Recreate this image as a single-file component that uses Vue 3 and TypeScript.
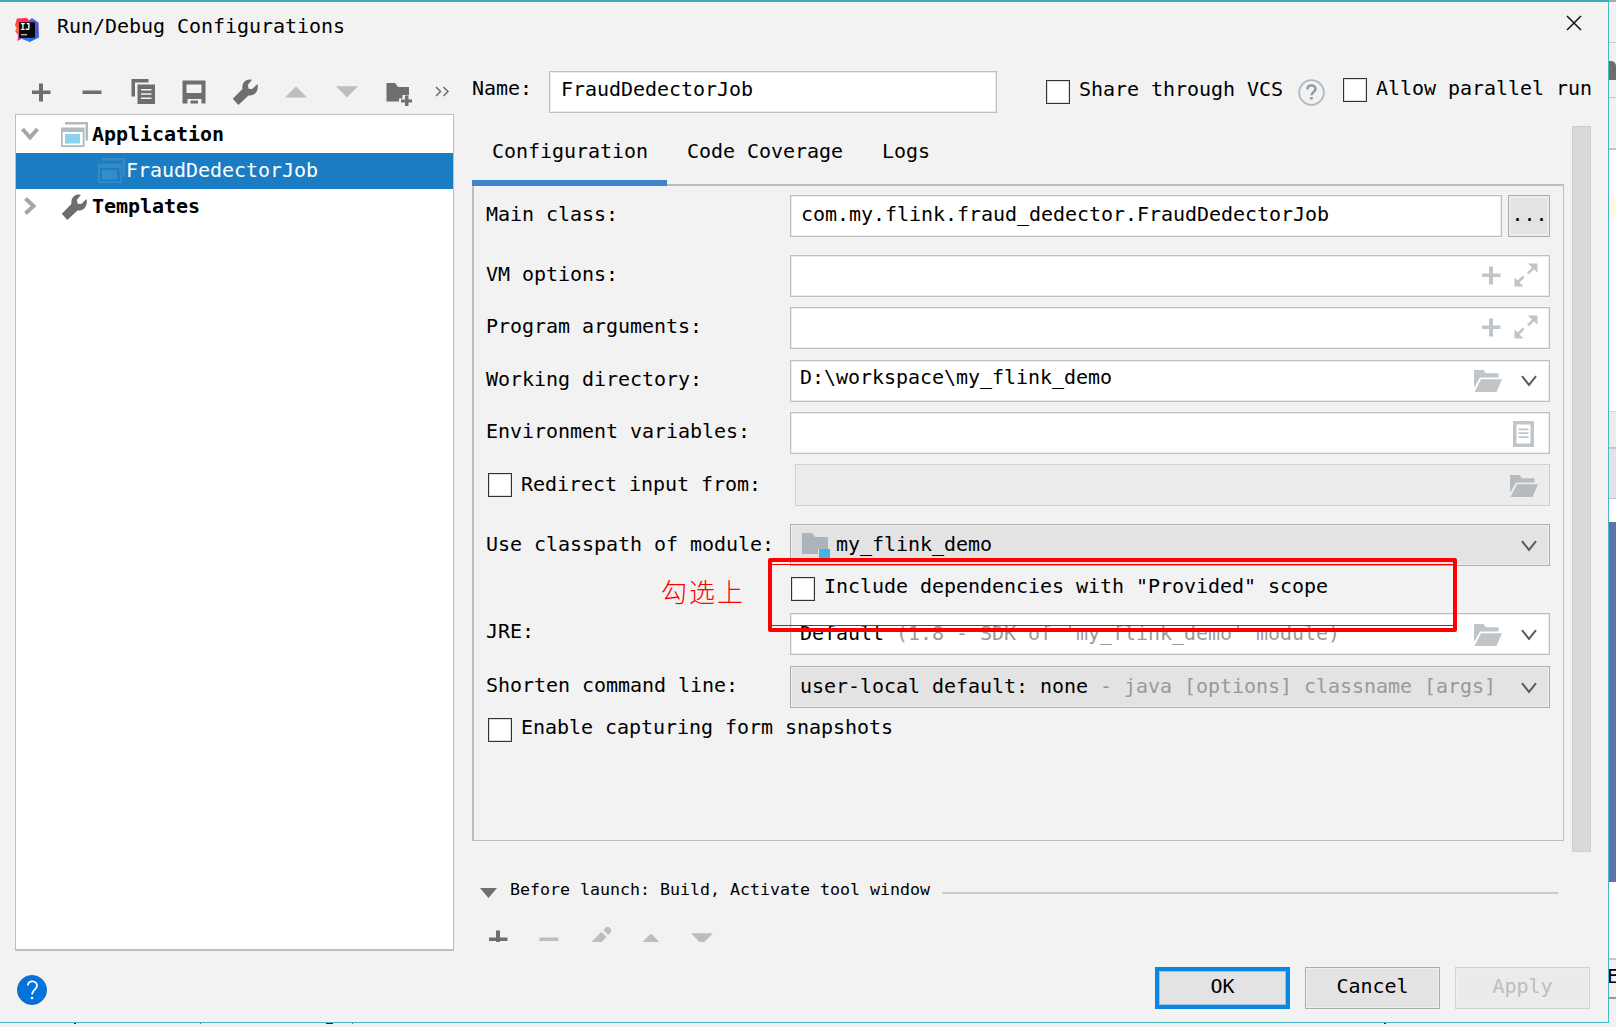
<script setup lang="ts">
import { ref } from 'vue'

interface ToolAction {
  icon: string
  title: string
  disabled?: boolean
}

const tools: ToolAction[] = [
  { icon: 'plus', title: 'Add' },
  { icon: 'minus', title: 'Remove' },
  { icon: 'copy', title: 'Copy' },
  { icon: 'save', title: 'Save' },
  { icon: 'wrench', title: 'Edit templates' },
  { icon: 'up', title: 'Move up', disabled: true },
  { icon: 'down', title: 'Move down', disabled: true },
  { icon: 'newfolder', title: 'Create folder' },
]

const launchTools: ToolAction[] = [
  { icon: 'plus', title: 'Add' },
  { icon: 'minus', title: 'Remove', disabled: true },
  { icon: 'pencil', title: 'Edit', disabled: true },
  { icon: 'up', title: 'Up', disabled: true },
  { icon: 'down', title: 'Down', disabled: true },
]

const tabs = ['Configuration', 'Code Coverage', 'Logs']
const activeTab = ref('Configuration')
</script>

<template>
  <div class="screen">
    <svg class="defs" width="0" height="0">
      <symbol id="plus" viewBox="0 0 27 27"><path d="M4 11.5h7v-7h4v7h7.500v3.500h-7.500v7.500h-4v-7.500h-7z" /></symbol>
      <symbol id="minus" viewBox="0 0 27 27"><path d="M3.500 11.500h19v3.500h-19z" /></symbol>
      <symbol id="copy" viewBox="0 0 27 27">
        <path d="M1.500 0h17v3.500H5v14H1.500z" /><path d="M7.500 5.500h17.500v19.500H7.500z" />
        <path class="cut" d="M11 10h10.500v1.600H11zM11 14.200h10.500v1.600H11zM11 18.400h10.500v1.600H11z" />
      </symbol>
      <symbol id="save" viewBox="0 0 27 27">
        <path fill-rule="evenodd" d="M1.500 1.500h23v23h-4v-4.500h-14v4.500h-5zM5.500 5.500v8.500h15V5.500z" /><path d="M9.500 21.500h7.500v3H9.500z" />
      </symbol>
      <symbol id="wrench" viewBox="0 0 27 27">
        <path d="M19.800 1.100C15.600-.7 9.600 2.500 10.400 10L.8 19.800l5.500 6.200 10.200-9.600c4.700.8 9.300-2.400 9.400-9.200l-.5-2.100-5.200 5-3.500-.3-.9-3.700z" />
      </symbol>
      <symbol id="up" viewBox="0 0 27 27"><path d="M13 7.500l11 11H2z" /></symbol>
      <symbol id="down" viewBox="0 0 27 27"><path d="M2 7.200h22L13 18.500z" /></symbol>
      <symbol id="newfolder" viewBox="0 0 27 27">
        <path d="M1.500 4h8.500l3 4h11v8h-6.500v3.500h-3.500v3H1.500z" /><path d="M20 16.500h3.500v4h3.500v3h-3.500V27H20v-3.500h-4v-3h4z" />
      </symbol>
      <symbol id="pencil" viewBox="0 0 27 27">
        <path d="M4 16.500L14.500 5.800l5 5.300L9 22H2v-4z" /><path d="M16.300 4l3-3c2-1.500 6.500 2 4.500 5.300l-2.600 2.600z" />
      </symbol>
      <symbol id="appwindow" viewBox="0 0 27 25">
        <path fill="#afbac3" d="M4 0h23v18.500h-2.500v-16H4z" />
        <path fill="#afbac3" fill-rule="evenodd" d="M0 5.500h23.500V25H0zM1.800 10v13.200h19.900V10z" />
        <path fill="#89d3ed" d="M4 12h15v9.500H4z" />
      </symbol>
      <symbol id="folder" viewBox="0 0 28 22"><path d="M0 0h9.500l2.500 3.300h12.500v4.200H6L0 18z" /><path d="M7 9.200h21L22.500 22H.5z" /></symbol>
      <symbol id="expand" viewBox="0 0 24 24">
        <path d="M14 .5h9.500v9l-3.500-3.200-5.200 5-1.800-1.700 5-5zM.5 14.500l3.200 3 5-4.900 1.800 1.800-5 5 4 4.100h-9z" />
      </symbol>
      <symbol id="chev" viewBox="0 0 16 12"><path d="M1 1.200l7 8.600 7-8.600" fill="none" stroke="#5a5a5a" stroke-width="2" /></symbol>
      <symbol id="doc" viewBox="0 0 21 26">
        <path fill-rule="evenodd" d="M0 0h21v26H0zM3.500 3.500v19h14v-19z" /><path d="M5.500 7.500h10v1.700h-10zM5.500 11.300h10v1.700h-10zM5.500 15.200h10v1.700h-10z" />
      </symbol>
    </svg>

    <div class="upper">
      <main class="dialog">
        <header class="titlebar">
          <svg class="logo" viewBox="0 0 24 24">
            <defs>
              <linearGradient id="lg1" x1="0" y1="0" x2="0" y2="1"><stop offset="0" stop-color="#fe2857" /><stop offset=".5" stop-color="#fd6a35" /><stop offset="1" stop-color="#b833c9" /></linearGradient>
              <linearGradient id="lg2" x1="0" y1="0" x2="0" y2="1"><stop offset="0" stop-color="#4b6fe0" /><stop offset=".4" stop-color="#6b45d2" /><stop offset="1" stop-color="#167eea" /></linearGradient>
            </defs>
            <path fill="url(#lg2)" d="M13 3l4-3 6.500 4.500.5 15L15 24l-8-3z" />
            <path fill="url(#lg1)" d="M2 .5L12 0l4 5-3 13-5 2-5.500 3L3 17l-3-4 1.500-2L0 7z" />
            <path fill="#080808" d="M4 4.200h16v15.600H4z" />
            <text x="5.200" y="12.300" font-size="8.500" font-weight="700" fill="#fff" font-family="DejaVu Sans Mono, monospace">IJ</text>
            <path fill="#bbb" d="M6 16h6v1.400H6z" />
          </svg>
          <h1>Run/Debug Configurations</h1>
          <svg class="close" viewBox="0 0 16 16"><path d="M1 1l14 14M15 1L1 15" fill="none" stroke="#111" stroke-width="1.500" /></svg>
        </header>

        <div class="body">
          <aside>
            <nav class="toolbar">
              <svg v-for="t in tools" :key="t.title" class="tool" :class="{ off: t.disabled }"><use :href="'#' + t.icon" /></svg>
              <svg class="more" viewBox="0 0 15 11"><path d="M1 1l4.500 4.500L1 10M8.500 1L13 5.500 8.500 10" fill="none" stroke="#6e6e6e" stroke-width="1.500" /></svg>
            </nav>
            <div class="tree">
              <div class="node">
                <svg class="twist" viewBox="0 0 18 18"><path d="M1.500 4l7.500 8.500L16.500 4" fill="none" stroke="#a6a6a6" stroke-width="4" /></svg>
                <svg class="appicon"><use href="#appwindow" /></svg><b>Application</b>
              </div>
              <div class="node selected"><svg class="appicon faded"><use href="#appwindow" /></svg><span>FraudDedectorJob</span></div>
              <div class="node">
                <svg class="twist" viewBox="0 0 18 18"><path d="M4.500 1.500L12.500 9l-8 7.500" fill="none" stroke="#a6a6a6" stroke-width="4" /></svg>
                <svg class="wrenchicon"><use href="#wrench" /></svg><b>Templates</b>
              </div>
            </div>
          </aside>

          <section class="editor">
            <div class="namerow">
              <label class="namelabel">Name:</label>
              <div class="field name">FraudDedectorJob</div>
              <i class="check share"></i><span class="sharetext">Share through VCS</span>
              <svg class="hint" viewBox="0 0 27 27"><circle cx="13.500" cy="13.500" r="12.300" fill="none" stroke="#afb8c0" stroke-width="1.800" /><path d="M9.500 10.500c0-5.500 8-5.200 8-.5 0 3-4 3.200-4 6.200" fill="none" stroke="#8d979e" stroke-width="2.400" /><path fill="#8d979e" d="M12.200 18h2.600v2.600h-2.600z" /></svg>
              <i class="check parallel"></i><span class="paralleltext">Allow parallel run</span>
            </div>

            <div class="content">
              <div class="pane">
                <div class="tabs">
                  <button v-for="t in tabs" :key="t" class="tab" :class="{ active: t === activeTab }" @click="activeTab = t">{{ t }}</button>
                </div>
                <div class="form">
                  <div class="row main"><label>Main class:</label><div class="field grow lead">com.my.flink.fraud_dedector.FraudDedectorJob</div><button class="browse">...</button></div>
                  <div class="row vm"><label>VM options:</label><div class="field grow end"><svg class="gi"><use href="#plus" /></svg><svg class="expand"><use href="#expand" /></svg></div></div>
                  <div class="row"><label>Program arguments:</label><div class="field grow end"><svg class="gi"><use href="#plus" /></svg><svg class="expand"><use href="#expand" /></svg></div></div>
                  <div class="row"><label>Working directory:</label><div class="field grow wd"><span class="fill">D:\workspace\my_flink_demo</span><svg class="folder"><use href="#folder" /></svg><svg class="chev"><use href="#chev" /></svg></div></div>
                  <div class="row"><label>Environment variables:</label><div class="field grow end"><svg class="doc"><use href="#doc" /></svg></div></div>
                  <div class="row redirect"><i class="check"></i><label>Redirect input from:</label><div class="field grow end disabled"><svg class="folder"><use href="#folder" /></svg></div></div>
                  <div class="row module"><label>Use classpath of module:</label><div class="field grow combo">
                    <svg class="modicon" viewBox="0 0 28 25"><path fill="#a9b4bc" d="M0 0h10l3 4h13v12H16v5H0z" /><path fill="#40b6e0" d="M17 16h11v9H17z" /></svg>
                    <span class="fill">my_flink_demo</span><svg class="chev"><use href="#chev" /></svg></div></div>
                  <div class="row include"><div class="note">勾选上</div><i class="check"></i><label>Include dependencies with "Provided" scope</label><div class="marker"></div></div>
                  <div class="row jre"><label>JRE:</label><div class="field grow"><span class="fill">Default <em>(1.8 - SDK of 'my_flink_demo' module)</em></span><svg class="folder"><use href="#folder" /></svg><svg class="chev"><use href="#chev" /></svg></div></div>
                  <div class="row shorten"><label>Shorten command line:</label><div class="field grow combo"><span class="fill">user-local default: none <em>- java [options] classname [args]</em></span><svg class="chev"><use href="#chev" /></svg></div></div>
                  <div class="row snapshots"><i class="check"></i><label>Enable capturing form snapshots</label></div>
                </div>
              </div>
              <div class="scrollbar"></div>
            </div>

            <div class="launch"><svg class="fold" viewBox="0 0 17 10"><path fill="#6e6e6e" d="M0 0h17L8.500 10z" /></svg><span>Before launch: Build, Activate tool window</span><hr /></div>
            <div class="launchtools"><svg v-for="t in launchTools" :key="t.icon" class="tool" :class="{ off: t.disabled }"><use :href="'#' + t.icon" /></svg></div>
          </section>
        </div>

        <footer>
          <svg class="help" viewBox="0 0 30 30"><circle cx="15" cy="15" r="14.600" fill="#0073dd" stroke="#1763ad" stroke-width=".8" /><path d="M10.800 10.500c.5-6 9.500-5.200 9.200.2-.2 4-4.700 4-4.900 8.800" fill="none" stroke="#fff" stroke-width="1.800" /><circle cx="15" cy="23" r="1.300" fill="#fff" /></svg>
          <button class="btn ok">OK</button><button class="btn">Cancel</button><button class="btn dim">Apply</button>
        </footer>
      </main>

      <div class="behind">
        <div class="b-top"></div><div class="b-bar"></div><div class="b-icon"></div><div class="b-bar2"></div><div class="b-bar3"></div>
        <div class="b-white"></div><div class="b-yellow"></div><div class="b-white2"></div><div class="b-gray"></div><div class="b-pale"></div>
        <div class="b-white3"></div><div class="b-blue"></div><div class="b-white4"></div><div class="b-text">E</div><div class="b-rest"></div>
      </div>
    </div>
    <div class="under"><i class="m1"></i><i class="m2"></i><i class="m3"></i><i class="m4"></i><i class="m5"></i></div>
  </div>
</template>

<style>
body { margin: 0; overflow: hidden; }
</style>

<style scoped>
* { box-sizing: border-box; }
.screen {
  width: 1616px; height: 1027px; overflow: hidden; background: #f2f2f2; color: #000;
  font: 20px/24px "DejaVu Sans Mono", "Liberation Mono", "Noto Sans CJK SC", monospace;
  letter-spacing: -0.04px; white-space: pre;
}
.defs { position: absolute; }
button { font: inherit; letter-spacing: inherit; color: inherit; padding: 0; margin: 0; border: 0; background: none; }
svg { display: block; flex: none; }
.upper { display: flex; height: 1023px; }
.dialog { width: 1609px; border-top: 2px solid #3cacbb; border-right: 1px solid #4db5c6; border-bottom: 1px solid #43b7c7; background: #f2f2f2; display: flex; flex-direction: column; }

.titlebar { height: 68px; display: flex; align-items: flex-start; padding: 12px 26px 0 15px; flex: none; }
.logo { width: 24px; height: 24px; margin-top: 4px; }
h1 { font: inherit; margin: 0 auto 0 18px; }
.close { width: 16px; height: 16px; margin-top: 1px; }

.body { display: flex; height: 881px; flex: none; }
aside { width: 439px; margin-left: 15px; display: flex; flex-direction: column; }
.toolbar { display: flex; gap: 24px; height: 44px; padding: 9px 0 0 13px; flex: none; }
.tool { width: 27px; height: 27px; fill: #6e6e6e; overflow: visible; }
.tool.off { fill: #bdbdbd; }
.cut { fill: #f2f2f2; }
.more { width: 15px; height: 11px; margin: 7px 0 0 -1px; }
.tree { height: 837px; background: #fff; border: 1px solid #bfbfbf; border-bottom-width: 2px; padding-top: 2px; }
.node { height: 36px; display: flex; align-items: center; padding: 0 0 2px 5px; }
.node b { margin-left: 4px; padding-bottom: 0; }
.twist { width: 18px; height: 18px; margin-right: 22px; }
.appicon { width: 27px; height: 25px; }
.selected { background: #1a7dc4; color: #fff; padding-left: 82px; }
.selected span { margin-left: 1px; }
.faded { opacity: .2; }
.wrenchicon { width: 27px; height: 27px; fill: #6e6e6e; overflow: visible; margin-top: 2px; }

.editor { width: 1120px; margin-left: 18px; }
.namerow { display: flex; align-items: flex-start; height: 56px; }
.namelabel { width: 76px; padding-top: 6px; }
.field { height: 42px; border: 1px solid #bfbfbf; box-shadow: inset 0 0 0 1px #ebebeb; background: #fff; display: flex; align-items: center; padding: 0 11px 4px 9px; }
.name { width: 448px; padding-left: 11px; margin: 1px 0 0 1px; padding-bottom: 7px; }
.check { width: 24px; height: 24px; border: 1.500px solid #333; background: #fff; flex: none; box-shadow: inset 0 0 0 1px #ddd; }
.share { margin: 10px 0 0 49px; }
.sharetext { margin: 7px 0 0 9px; }
.hint { width: 27px; height: 27px; margin: 9px 0 0 15px; }
.parallel { margin: 8px 0 0 18px; }
.paralleltext { margin: 6px 0 0 9px; }

.content { display: flex; align-items: flex-start; height: 727px; }
.pane { width: 1092px; height: 715px; display: flex; flex-direction: column; }
.tabs { display: flex; height: 60px; border-bottom: 2px solid #bdbdbd; flex: none; }
.tab { height: 60px; padding: 0 20px 4px; border-bottom: 6px solid transparent; flex: none; }
.active { border-color: #4083c9; width: 195px; }
.tab:nth-child(3) { padding-left: 19px; }
.form { flex: 1; border: 1px solid #bdbdbd; border-left-width: 2px; border-top: 0; padding: 9px 13px 0 12px; }
.scrollbar { width: 19px; height: 726px; margin-left: 8px; background: #d9d9d9; border: 1px solid #cdcdcd; }

.row { display: flex; height: 42px; margin-bottom: 10.300px; align-items: center; }
.row > label { width: 304px; padding-bottom: 4px; flex: none; }
.grow { flex: 1; min-width: 0; }
.fill { flex: 1; }
.end { justify-content: flex-end; padding-bottom: 0; }
.row.main { margin-bottom: 18px; }
.lead { padding-left: 10px; }
.browse { width: 42px; height: 42px; margin-left: 6px; border: 1px solid #ababab; box-shadow: inset 0 0 0 2px #ededed; background: #e3e3e3; padding: 0 0 5px 1px; }
.gi { width: 27px; height: 27px; fill: #bfc5c9; margin: 0 9px 1px 0; }
.expand { width: 24px; height: 24px; fill: #bfc5c9; margin-bottom: 2px; }
.folder { width: 28px; height: 22px; fill: #bfc5c9; margin: 4px 19px 0 0; }
.chev { width: 16px; height: 12px; margin: 4px 1px 0 0; }
.wd { padding-bottom: 4px; }
.wd .fill { padding-bottom: 3px; }
.doc { width: 21px; height: 26px; fill: #bfc5c9; margin: 2px 4px 0 0; }
.redirect .check { margin-left: 2px; }
.redirect > label { width: 283px; padding-left: 9px; padding-bottom: 3px; }
.disabled { background: #ececec; border-color: #d0d0d0; box-shadow: none; }
.disabled .folder { margin: 1px 0 0; fill: #b6bbbf; }
.row.module { margin-top: 18.300px; margin-bottom: 0; }
.module > label { padding-bottom: 3px; }
.combo { background: #e3e3e3; border-color: #adadad; box-shadow: inset 0 0 0 1px #efefef; }
.module .combo { padding-bottom: 3px; padding-left: 11px; }
.modicon { width: 28px; height: 25px; margin: 4px 6px 0 0; }
.row.include { position: relative; height: 47px; margin: 0; }
.note { width: 305px; padding: 3px 0 0 175px; color: #fe0000; font: 300 26px/30px "Noto Sans CJK SC", sans-serif; letter-spacing: 2px; }
.include > .check { margin-top: -1px; }
.include > label { width: auto; padding-left: 9px; padding-bottom: 7px; }
.marker { position: absolute; left: 282px; top: -8.500px; width: 689px; height: 74px; border: 4px solid #fe0000; border-radius: 2px; }
.marker::before { content: ""; display: block; height: 66px; margin-top: 2px; border-top: 1px solid #fe0000; }
.marker::after { content: ""; display: block; height: 1px; margin-top: -6px; background: #fe0000; }
.jre > label { padding-bottom: 6px; }
.jre .field { padding-bottom: 2px; }
em { font-style: normal; color: #999; }
.shorten > label { padding-bottom: 4px; }
.shorten .combo { padding-bottom: 2px; }
.row.snapshots { height: 24px; margin-top: 0; }
.snapshots .check { margin-left: 2px; }
.snapshots > label { width: auto; padding-left: 9px; padding-bottom: 6px; }

.launch { display: flex; align-items: center; height: 24px; margin: 24px 34px 0 8px; font-size: 16.610px; letter-spacing: 0; }
.fold { width: 17px; height: 10px; margin: 7px 12px 0 0; }
.launch span { width: 432px; margin: 1px 0 0 1px; flex: none; }
.launch hr { flex: 1; height: 2px; border: 0; background: #ccc; margin: 7px 0 0 0; }
.launchtools { display: flex; gap: 24px; margin: 25px 0 0 13px; height: 16px; overflow: hidden; }

footer { display: flex; align-items: flex-start; padding: 16px 18px 0 17px; gap: 15px; }
.help { width: 30px; height: 30px; margin: 8px auto 0 0; }
.btn { width: 135px; height: 42px; border: 1px solid #ababab; box-shadow: inset 0 0 0 1px #efefef; background: #e3e3e3; padding-bottom: 5px; }
.ok { border: 4px solid #0a85e1; box-shadow: inset 0 0 0 1px #9dc3e2; }
.dim { color: #bdbdbd; background: #ebebeb; border-color: #d0d0d0; }

.behind { width: 7px; overflow: hidden; background: #f2f2f2; display: flex; flex-direction: column; }
.behind > div { flex: none; }
.b-top { height: 2px; background: #aaa; }
.b-bar { height: 41px; border-bottom: 1px solid #c8c8c8; }
.b-icon { height: 19px; margin-top: 18px; background: #6e6e6e; border-top-right-radius: 5px; }
.b-bar2 { height: 18px; border-bottom: 1px solid #c8c8c8; }
.b-bar3 { height: 52px; border-bottom: 2px solid #c4c4c4; }
.b-white { height: 45px; background: #fff; }
.b-yellow { height: 22px; background: #fffae3; }
.b-white2 { height: 194px; background: #fff; }
.b-gray { height: 38px; background: #ececec; border-top: 1px solid #d6d6d6; border-bottom: 2px solid #c5c5c5; }
.b-pale { height: 50px; background: #dfe3ee; border-bottom: 1px solid #c5c5c5; }
.b-white3 { height: 23px; background: #fff; }
.b-blue { height: 360px; background: #5a74ac; }
.b-white4 { height: 78px; background: #fff; border-bottom: 2px solid #c5c5c5; }
.b-text { height: 39px; padding-top: 4px; text-indent: -2px; border-bottom: 2px solid #999; }
.b-rest { height: 24px; }
.under { height: 4px; display: flex; background: #f2f2f2; }
.under i { height: 1px; background: #222; }
.m1 { width: 2px; margin-left: 74px; }
.m2 { width: 1px; margin-left: 124px; opacity: .6; }
.m3 { width: 7px; margin-left: 125px; }
.m4 { width: 1px; margin-left: 19px; opacity: .6; }
.m5 { width: 2px; margin-left: 1031px; }
</style>
